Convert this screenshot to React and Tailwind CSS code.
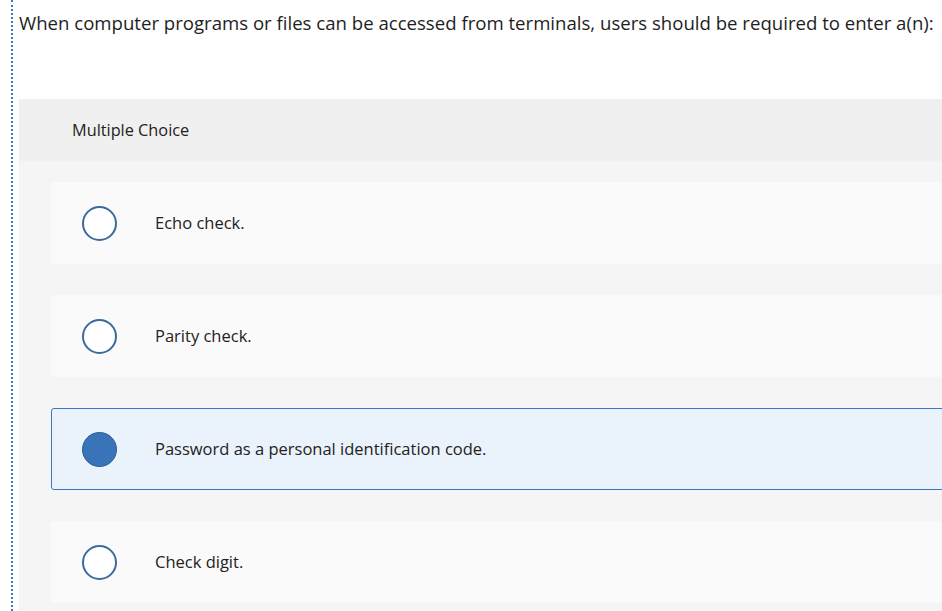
import React from 'react'

const options = [
  { id: 'a', label: 'Echo check.' },
  { id: 'b', label: 'Parity check.' },
  { id: 'c', label: 'Password as a personal identification code.', selected: true },
  { id: 'd', label: 'Check digit.' },
]

function Option({ label, selected }) {
  return (
    <div
      className={
        selected
          ? 'flex items-center h-[82px] rounded-[3px] border border-[#3a78c3] bg-[#eaf2fb] pl-[30px]'
          : 'flex items-center h-[82px] rounded-[3px] border border-transparent bg-[#fafafa] pl-[30px]'
      }
    >
      {selected ? (
        <span className="block shrink-0 w-[35px] h-[35px] rounded-full bg-[#3a74b8] border border-[#2c5d96]" />
      ) : (
        <span className="block shrink-0 w-[35px] h-[35px] rounded-full bg-white border-2 border-[#3a6a9e]" />
      )}
      <span className="ml-[38px] text-[16.5px] text-[#222]">{label}</span>
    </div>
  )
}

export default function App() {
  return (
    <div className="min-h-[611px] bg-white font-['Open_Sans','Lato',sans-serif] overflow-hidden">
      <div className="ml-[11px] border-l-2 border-dotted border-[#3b7bc2] min-h-[611px] pl-[6px]">
        <p className="pt-[9px] text-[18.6px] leading-[28px] text-[#1e1e1e] whitespace-nowrap">
          When computer programs or files can be accessed from terminals, users should be required to enter a(n):
        </p>
        <div className="mt-[62px] bg-[#f5f5f5] pb-[8px]">
          <div className="h-[62px] bg-[#f0f0f0] flex items-center pl-[53px] text-[16.3px] text-[#222]">
            Multiple Choice
          </div>
          <div className="flex flex-col gap-[31px] pt-[21px] pl-[32px] -mr-[10px]">
            {options.map((o) => (
              <Option key={o.id} label={o.label} selected={o.selected} />
            ))}
          </div>
        </div>
      </div>
    </div>
  )
}
